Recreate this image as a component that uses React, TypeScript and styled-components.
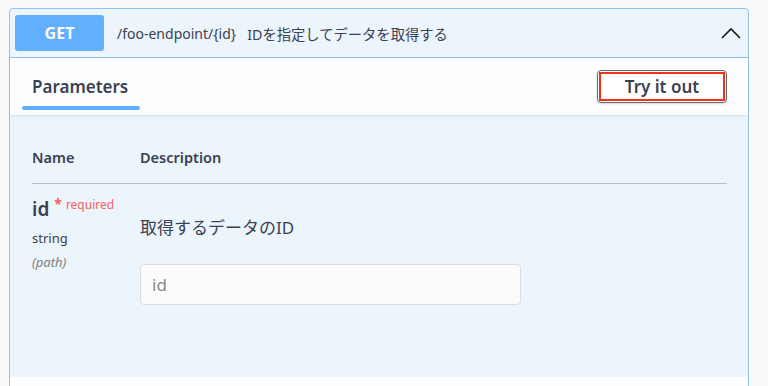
import styled, { createGlobalStyle } from "styled-components";

const Global = createGlobalStyle`
  html, body {
    margin: 0;
    background: #fafafa;
    font-family: "Noto Sans", "Noto Sans CJK JP", sans-serif;
    color: #3b4151;
  }
  * {
    box-sizing: border-box;
  }
`;

const Page = styled.div`
  padding: 8px 19px 0 9px;
  height: 386px;
  overflow: hidden;
`;

const Opblock = styled.div`
  border: 1px solid #8fc3f8;
  border-radius: 4px;
  background: #ecf4fc;
  height: 420px;
  display: flex;
  flex-direction: column;
`;

const Summary = styled.div`
  display: flex;
  align-items: center;
  height: 49px;
  padding: 0 7px 0 5px;
  border-bottom: 1px solid #8fc3f8;
`;

const Method = styled.span`
  display: flex;
  align-items: center;
  justify-content: center;
  width: 89px;
  height: 36px;
  border-radius: 3px;
  background: #61affe;
  color: #fff;
  font-size: 16px;
  font-weight: 700;
`;

const Path = styled.span`
  margin-left: 13px;
  font-size: 14px;
  color: #3b4151;
`;

const Desc = styled.span`
  margin-left: 11px;
  font-size: 14.3px;
  color: #3b4151;
  flex: 1;
`;

const Chevron = styled.svg`
  width: 20px;
  height: 20px;
`;

const SectionHeader = styled.div`
  display: flex;
  align-items: center;
  justify-content: space-between;
  height: 57px;
  padding: 0 21px 0 12px;
  background: rgba(255, 255, 255, 0.8);
  box-shadow: 0 1px 2px rgba(0, 0, 0, 0.1);
`;

const Tab = styled.div`
  align-self: stretch;
  display: flex;
  align-items: center;
  width: 118px;
  padding: 0 10px;
  position: relative;
  font-size: 17px;
  font-weight: 600;
  &::after {
    content: "";
    position: absolute;
    left: 0;
    right: 0;
    bottom: 5px;
    height: 4px;
    border-radius: 2px;
    background: #61affe;
  }
`;

const TryButton = styled.button`
  width: 130px;
  height: 33px;
  border: 1px solid #6b6b6b;
  border-radius: 4px;
  background: #fff;
  padding: 1px;
  font-family: inherit;
  box-shadow: 0 1px 2px rgba(0, 0, 0, 0.15);
`;

const Highlight = styled.span`
  display: flex;
  align-items: center;
  justify-content: center;
  height: 100%;
  border: 2px solid #f2321b;
  font-size: 17px;
  font-weight: 600;
  color: #3b4151;
`;

const Body = styled.div`
  padding: 22px 21px 0 22px;
  height: 262px;
`;

const HeadRow = styled.div`
  display: flex;
  height: 47px;
  padding-bottom: 6px;
  align-items: center;
  border-bottom: 1px solid #b8bec9;
`;

const HeadCell = styled.div<{ $w?: number }>`
  width: ${(p) => (p.$w ? `${p.$w}px` : "auto")};
  font-size: 14.5px;
  font-weight: 600;
  color: #3b4151;
`;

const ParamRow = styled.div`
  display: flex;
  padding-top: 12px;
`;

const NameCol = styled.div`
  width: 108px;
  display: flex;
  flex-direction: column;
`;

const ParamName = styled.div`
  font-size: 19px;
  font-weight: 600;
  line-height: 26px;
`;

const Required = styled.span`
  position: relative;
  top: -7px;
  margin-left: 5px;
  font-size: 12px;
  font-weight: 400;
  color: #ff6060;
  &::before {
    content: "*";
    font-size: 14px;
    font-weight: 700;
    margin-right: 4px;
  }
`;

const ParamType = styled.div`
  margin-top: 4px;
  font-size: 13px;
  line-height: 18px;
`;

const ParamIn = styled.div`
  margin-top: 6px;
  font-size: 13px;
  line-height: 18px;
  font-style: italic;
  color: #808080;
`;

const DescCol = styled.div`
  display: flex;
  flex-direction: column;
  padding-top: 20px;
`;

const DescText = styled.div`
  font-size: 17px;
  line-height: 24px;
`;

const Input = styled.input`
  margin-top: 24px;
  width: 381px;
  height: 41px;
  border: 1px solid #dcdcdc;
  border-radius: 4px;
  background: #fbfbfb;
  padding: 0 11px;
  font-family: inherit;
  font-size: 17px;
  &::placeholder {
    color: #8a8a8a;
  }
`;

const Footer = styled.div`
  flex: 1;
  background: rgba(255, 255, 255, 0.85);
`;

export default function App() {
  return (
    <>
      <Global />
      <Page>
        <Opblock>
          <Summary>
            <Method>GET</Method>
            <Path>/foo-endpoint/&#8203;{"{id}"}</Path>
            <Desc>IDを指定してデータを取得する</Desc>
            <Chevron viewBox="0 0 20 20">
              <path d="M1 15 L10 6 L19 15" fill="none" stroke="#1a1a1a" strokeWidth="1.6" />
            </Chevron>
          </Summary>
          <SectionHeader>
            <Tab>Parameters</Tab>
            <TryButton>
              <Highlight>Try it out</Highlight>
            </TryButton>
          </SectionHeader>
          <Body>
            <HeadRow>
              <HeadCell $w={108}>Name</HeadCell>
              <HeadCell>Description</HeadCell>
            </HeadRow>
            <ParamRow>
              <NameCol>
                <ParamName>
                  id<Required>required</Required>
                </ParamName>
                <ParamType>string</ParamType>
                <ParamIn>(path)</ParamIn>
              </NameCol>
              <DescCol>
                <DescText>取得するデータのID</DescText>
                <Input placeholder="id" />
              </DescCol>
            </ParamRow>
          </Body>
          <Footer />
        </Opblock>
      </Page>
    </>
  );
}
